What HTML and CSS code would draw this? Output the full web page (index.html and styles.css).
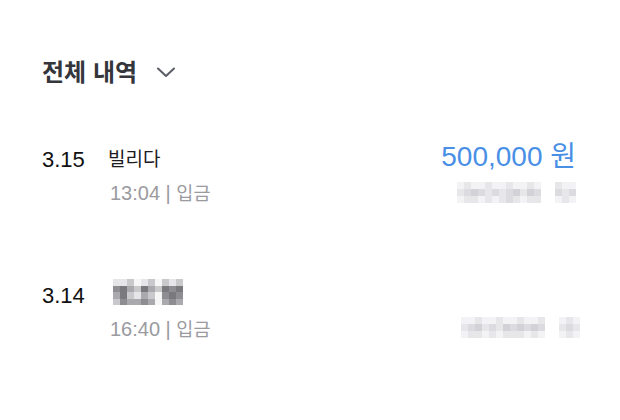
FILE: index.html
```html
<!DOCTYPE html>
<html lang="ko">
<head>
  <meta charset="UTF-8" />
  <meta name="viewport" content="width=device-width, initial-scale=1.0"/>
  <title>전체 내역</title>
  <link rel="stylesheet" href="styles.css">
</head>
<body>
  <div class="filtro">
    <span>전체 내역</span>
    <svg class="flecha" width="20" height="14" viewBox="0 0 20 14">
      <path d="M2 3.5 L10 11 L18 3.5" fill="none" stroke="#5a5d66" stroke-width="2" stroke-linecap="round" stroke-linejoin="round"/>
    </svg>
  </div>

  <div class="lista">
    <div class="fila">
      <div class="fecha">3.15</div>
      <div class="detalle">
        <div class="nombre">빌리다</div>
        <div class="sub">13:04 | <span class="tipo">입금</span></div>
      </div>
      <div class="derecha">
        <div class="monto">500,000 원</div>
        <div class="mosaico claro">
          <i class="a"></i><i class="b"></i><i class="a"></i><i class="a"></i><i class="b"></i><i class="a"></i><i class="a"></i><i class="b"></i><i class="a"></i><i class="a"></i><i class="b"></i><i class="a"></i><i class="v"></i><i class="v"></i><i class="b"></i><i class="a"></i><i class="a"></i>
          <i class="b"></i><i class="c"></i><i class="d"></i><i class="c"></i><i class="b"></i><i class="c"></i><i class="b"></i><i class="c"></i><i class="d"></i><i class="b"></i><i class="d"></i><i class="c"></i><i class="v"></i><i class="v"></i><i class="c"></i><i class="b"></i><i class="c"></i>
          <i class="a"></i><i class="b"></i><i class="b"></i><i class="a"></i><i class="b"></i><i class="a"></i><i class="b"></i><i class="c"></i><i class="b"></i><i class="a"></i><i class="b"></i><i class="b"></i><i class="v"></i><i class="v"></i><i class="a"></i><i class="b"></i><i class="a"></i>
        </div>
      </div>
    </div>

    <div class="fila">
      <div class="fecha">3.14</div>
      <div class="detalle">
        <div class="mosaico oscuro">
          <i class="a"></i><i class="a"></i><i class="b"></i><i class="v"></i><i class="a"></i><i class="b"></i><i class="v"></i><i class="b"></i><i class="a"></i><i class="b"></i>
          <i class="d"></i><i class="e"></i><i class="c"></i><i class="b"></i><i class="e"></i><i class="c"></i><i class="b"></i><i class="e"></i><i class="d"></i><i class="e"></i>
          <i class="c"></i><i class="e"></i><i class="b"></i><i class="a"></i><i class="c"></i><i class="b"></i><i class="v"></i><i class="d"></i><i class="e"></i><i class="d"></i>
          <i class="b"></i><i class="d"></i><i class="c"></i><i class="c"></i><i class="d"></i><i class="c"></i><i class="v"></i><i class="c"></i><i class="d"></i><i class="c"></i>
        </div>
        <div class="sub">16:40 | <span class="tipo">입금</span></div>
      </div>
      <div class="derecha">
        <div class="mosaico claro">
          <i class="a"></i><i class="a"></i><i class="b"></i><i class="a"></i><i class="a"></i><i class="b"></i><i class="a"></i><i class="a"></i><i class="b"></i><i class="a"></i><i class="a"></i><i class="b"></i><i class="v"></i><i class="v"></i><i class="a"></i><i class="b"></i><i class="a"></i>
          <i class="b"></i><i class="c"></i><i class="d"></i><i class="b"></i><i class="c"></i><i class="b"></i><i class="d"></i><i class="c"></i><i class="d"></i><i class="c"></i><i class="d"></i><i class="c"></i><i class="v"></i><i class="v"></i><i class="b"></i><i class="c"></i><i class="b"></i>
          <i class="a"></i><i class="b"></i><i class="b"></i><i class="a"></i><i class="b"></i><i class="a"></i><i class="b"></i><i class="b"></i><i class="b"></i><i class="a"></i><i class="b"></i><i class="a"></i><i class="v"></i><i class="v"></i><i class="a"></i><i class="b"></i><i class="a"></i>
        </div>
      </div>
    </div>
  </div>
</body>
</html>
```

FILE: styles.css
```css
body {
  margin: 0;
  background: #ffffff;
  font-family: "Liberation Sans", "Noto Sans CJK KR", sans-serif;
  color: #1c1c1e;
  padding: 54px 44px 0 42px;
}

.filtro {
  display: flex;
  align-items: center;
  gap: 19px;
  font-family: "Noto Sans CJK KR", sans-serif;
  font-size: 24px;
  font-weight: 700;
  color: #34363c;
  line-height: 34px;
}

.flecha {
  margin-top: 2px;
}

.lista {
  margin-top: 58px;
  display: flex;
  flex-direction: column;
  gap: 75px;
}

.fila {
  display: flex;
  align-items: flex-start;
}

.fecha {
  width: 66px;
  font-size: 22px;
  line-height: 28px;
  color: #111;
}

.detalle {
  flex: 1;
  display: flex;
  flex-direction: column;
}

.nombre {
  font-size: 19px;
  line-height: 28px;
  color: #1c1c1e;
}

.sub {
  margin-top: 6px;
  font-size: 20px;
  line-height: 26px;
  color: #9a9a9f;
  padding-left: 2px;
}

.sub .tipo {
  font-size: 18.5px;
}

.derecha {
  display: flex;
  flex-direction: column;
  align-items: flex-end;
}

.monto {
  font-size: 28px;
  line-height: 32px;
  color: #4a8fe6;
  margin-top: -5px;
}

/* pixelado */
.mosaico {
  display: grid;
  grid-auto-rows: 7px;
}

.mosaico i {
  display: block;
}

.mosaico.claro {
  grid-template-columns: repeat(17, 7px);
  margin-top: 9px;
}

.fila:last-child .derecha .mosaico.claro {
  margin: 35px -4px 0 0;
}

.mosaico.claro .a { background: #f3f3f5; }
.mosaico.claro .b { background: #e7e7ea; }
.mosaico.claro .c { background: #dcdce0; }
.mosaico.claro .d { background: #d2d2d7; }
.mosaico.claro .v { background: #ffffff; }

.mosaico.oscuro {
  grid-template-columns: repeat(10, 7px);
  grid-auto-rows: 6.5px;
  margin: -3px 0 5px 5px;
}

.mosaico.oscuro .a { background: #e6e6e8; }
.mosaico.oscuro .b { background: #c9c9cc; }
.mosaico.oscuro .c { background: #aaaaae; }
.mosaico.oscuro .d { background: #8e8e92; }
.mosaico.oscuro .e { background: #7a7a7e; }
.mosaico.oscuro .v { background: #f6f6f7; }
```
